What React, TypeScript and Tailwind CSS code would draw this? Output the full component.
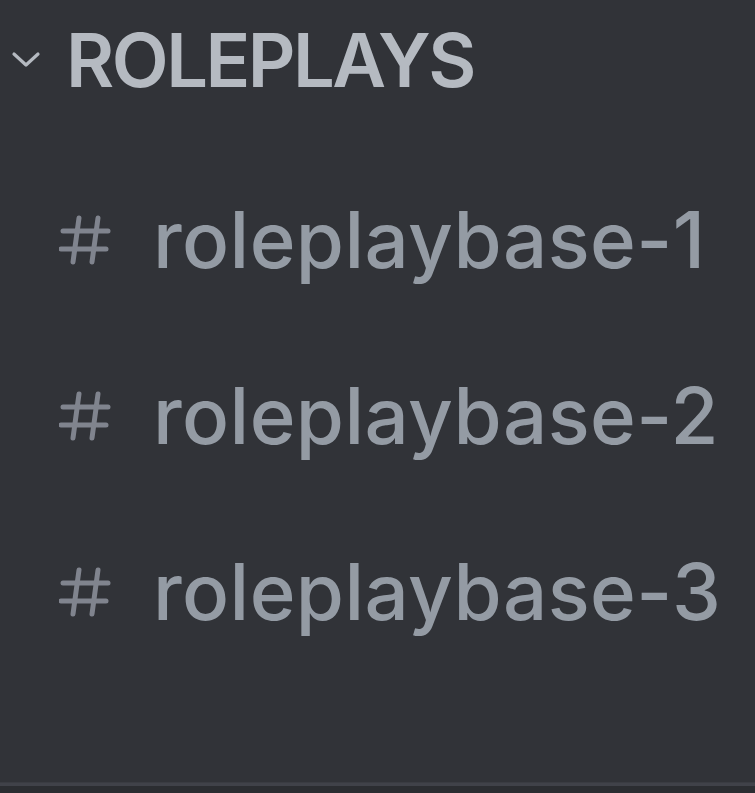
const channels = ["roleplaybase-1", "roleplaybase-2", "roleplaybase-3"]

function Chevron() {
    return (
        <svg width="30" height="18" viewBox="0 0 30 18" fill="none">
            <path d="M3 3 L15 14 L27 3" stroke="#b5bac1" strokeWidth="3.2" strokeLinecap="round" strokeLinejoin="round" />
        </svg>
    )
}

function Hash() {
    return (
        <svg width="52" height="50" viewBox="0 0 52 50" fill="none">
            <g stroke="#80848e" strokeWidth="5" strokeLinecap="round">
                <path d="M20 3 L14 47" />
                <path d="M39 3 L33 47" />
                <path d="M4 16 L49 16" />
                <path d="M2 34 L47 34" />
            </g>
        </svg>
    )
}

export default function App() {
    return (
        <div className="w-[755px] h-[793px] flex flex-col bg-[#313338]" style={{ fontFamily: "Inter, 'Noto Sans', sans-serif" }}>
            <div className="flex-1">
                <div className="flex items-center h-[120px] pl-[11px]">
                    <Chevron />
                    <span className="ml-[25px] text-[74px] font-semibold leading-none text-[#b5bac1] tracking-[-2.5px]">ROLEPLAYS</span>
                </div>
                <div className="flex flex-col pt-[32px]">
                    {channels.map((name) => (
                        <div key={name} className="flex items-center h-[176px] pl-[59px]">
                            <Hash />
                            <span className="ml-[42px] text-[78px] font-medium leading-none text-[#949ba4] tracking-[0.4px]">{name}</span>
                        </div>
                    ))}
                </div>
            </div>
            <div className="h-[1px] bg-[#3a3c42]" />
            <div className="h-[3px] bg-[#404249]" />
            <div className="h-[7px] bg-[#2b2d31]" />
        </div>
    )
}
